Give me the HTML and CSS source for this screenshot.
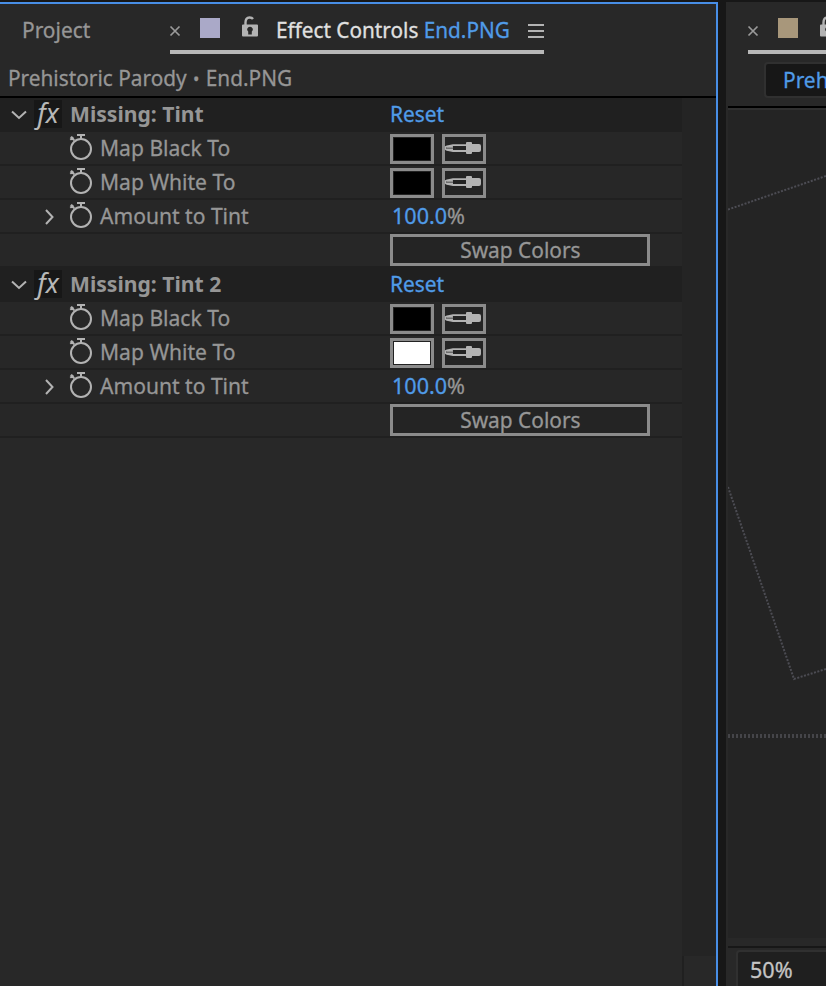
FILE: index.html
```html
<!DOCTYPE html>
<html lang="en">
<head>
<meta charset="utf-8">
<title>Effect Controls</title>
<link rel="stylesheet" href="styles.css">
</head>
<body>
<svg width="0" height="0" class="defs">
  <symbol id="watch" viewBox="0 0 24 28"><circle cx="12" cy="16" r="10" fill="none" stroke="#b3b3b3" stroke-width="2"/><path d="M8 2h8M12 2v4M1.800 3.800l3.400 3.400M1.300 6.800l3-2.500" fill="none" stroke="#b3b3b3" stroke-width="2"/></symbol>
  <symbol id="dropper" viewBox="0 0 38 24"><path d="M21 8.200H8L2 9.300Q.2 9.800.2 11T2 12.800l6 1.200H21M2 9.800h6M2 12.300h6" fill="none" stroke="#b3b3b3" stroke-width="1.800"/><path d="M22 5h4q1 0 1 1v1h7q2 0 2 2v4q0 2-2 2h-7v1q0 1-1 1h-4q-1 0-1-1V6q0-1 1-1z" fill="#b3b3b3"/></symbol>
  <symbol id="lock" viewBox="0 0 18 22"><path d="M3.500 9V6.500q0-5 4-5Q10 1.500 11 3" fill="none" stroke="#b3b3b3" stroke-width="2.400"/><path fill-rule="evenodd" d="M1 8.500h14q1 0 1 1v10q0 1-1 1H1q-1 0-1-1v-10q0-1 1-1zM8 10.700a2.700 2.700 0 0 0-1.800 4.800V18.500h3.600v-3A2.700 2.700 0 0 0 8 10.700z" fill="#b3b3b3"/></symbol>
  <symbol id="close" viewBox="0 0 12 12"><path d="M1.500 1.500l9 9M10.500 1.500l-9 9" stroke="#9a9a9a" stroke-width="1.700"/></symbol>
  <symbol id="down" viewBox="0 0 16 10"><path d="M1 1.500L8 8l7-6.500" fill="none" stroke="#b3b3b3" stroke-width="2"/></symbol>
  <symbol id="right" viewBox="0 0 10 16"><path d="M2 1L8.500 8 2 15" fill="none" stroke="#b3b3b3" stroke-width="2"/></symbol>
</svg>
<div class="app">
  <section class="controls">
    <header class="tabs">
      <div class="project"><span class="t">Project</span></div>
      <div class="tab">
        <svg class="x"><use href="#close"/></svg><i class="chip lilac"></i><svg class="lock"><use href="#lock"/></svg>
        <span class="t title">Effect Controls <b>End.PNG</b></span>
        <i class="burger"></i>
      </div>
    </header>
    <div class="crumb"><span class="t">Prehistoric Parody <span class="dot">•</span> End.PNG</span></div>
    <div class="body">
      <div class="effects">
        <div class="head"><svg class="down"><use href="#down"/></svg><span class="fx"><span>fx</span></span><span class="name"><span class="t">Missing: Tint</span></span><span class="t link reset">Reset</span></div>
        <div class="row"><span class="arrow"></span><svg class="watch"><use href="#watch"/></svg><span class="label"><span class="t">Map Black To</span></span><i class="swatch"></i><span class="pick"><svg><use href="#dropper"/></svg></span></div>
        <div class="row"><span class="arrow"></span><svg class="watch"><use href="#watch"/></svg><span class="label"><span class="t">Map White To</span></span><i class="swatch"></i><span class="pick"><svg><use href="#dropper"/></svg></span></div>
        <div class="row"><span class="arrow"><svg><use href="#right"/></svg></span><svg class="watch"><use href="#watch"/></svg><span class="label"><span class="t">Amount to Tint</span></span><span class="t value"><b>100.0</b>%</span></div>
        <div class="row last"><button><span class="t">Swap Colors</span></button></div>
        <div class="head second"><svg class="down"><use href="#down"/></svg><span class="fx"><span>fx</span></span><span class="name"><span class="t">Missing: Tint 2</span></span><span class="t link reset">Reset</span></div>
        <div class="row"><span class="arrow"></span><svg class="watch"><use href="#watch"/></svg><span class="label"><span class="t">Map Black To</span></span><i class="swatch"></i><span class="pick"><svg><use href="#dropper"/></svg></span></div>
        <div class="row"><span class="arrow"></span><svg class="watch"><use href="#watch"/></svg><span class="label"><span class="t">Map White To</span></span><i class="swatch white"></i><span class="pick"><svg><use href="#dropper"/></svg></span></div>
        <div class="row"><span class="arrow"><svg><use href="#right"/></svg></span><svg class="watch"><use href="#watch"/></svg><span class="label"><span class="t">Amount to Tint</span></span><span class="t value"><b>100.0</b>%</span></div>
        <div class="row"><button><span class="t">Swap Colors</span></button></div>
      </div>
      <div class="scroll"><i class="corner"></i></div>
    </div>
  </section>
  <section class="comp">
    <header class="comp-tab"><svg class="x"><use href="#close"/></svg><i class="chip tan"></i><svg class="lock"><use href="#lock"/></svg></header>
    <div class="comp-nav"><div class="comp-name"><span class="t">Preh</span></div></div>
    <div class="viewer"><svg viewBox="728 110 98 828"><g fill="none" stroke="#4c4c53" stroke-width="2" stroke-dasharray="2 1.500"><path d="M728 209.500L826 176M728 487l66 192 32-10"/><path d="M728 736h98" stroke="#454549" stroke-width="4" stroke-dasharray="2 2"/></g></svg></div>
    <footer><div class="zoom"><span class="t">50%</span></div></footer>
  </section>
</div>
</body>
</html>
```
FILE: styles.css
```css
* { box-sizing: border-box; }
body { margin: 0; background: #171717; color: #969696; font: 22px/30px "Noto Sans", sans-serif; overflow: hidden; }
svg { display: block; flex: none; }
i { flex: none; }
b { font-weight: inherit; color: #509be8; }
.defs { position: absolute; }
.app { display: flex; gap: 8px; height: 986px; padding-top: 2px; overflow: hidden; }
.t { display: inline-block; white-space: nowrap; transform: scaleX(.95); transform-origin: 0 50%; -webkit-text-stroke: .3px currentColor; }
.link { color: #509be8; }

.controls { width: 718px; flex: none; display: flex; flex-direction: column; background: #282828; border-top: 2px solid #488ee6; border-right: 2px solid #488ee6; }
.tabs { height: 50px; display: flex; }
.project { width: 170px; padding: 10px 0 0 22px; }
.tab { width: 374px; display: flex; border-bottom: 4px solid #b8b8b8; }
.x { width: 12px; height: 12px; margin: 21px 0 0 -1px; }
.chip { width: 20px; height: 20px; }
.lilac { background: #aaa9c8; margin: 14px 0 0 19px; }
.tan { background: #a8977b; }
.lock { width: 18px; height: 22px; }
.tab .lock { margin: 12px 0 0 22px; }
.title { width: 252px; margin: 10px 0 0 16px; color: #e0e0e0; transform: scaleX(.943); }
.burger { width: 16px; height: 14px; margin: 20px 0 0 auto; background: repeating-linear-gradient(#b3b3b3 0 2px, transparent 2px 6px); }
.crumb { height: 44px; padding: 8px 0 0 8px; border-bottom: 2px solid #000; }
.crumb .t { transform: scaleX(.946); }
.dot { font-size: 18px; vertical-align: 1px; margin: 0 1px; }
.body { flex: 1; display: flex; }
.effects { width: 682px; }
.head { height: 34px; display: flex; align-items: flex-start; background: #202020; }
.second { height: 36px; padding-top: 2px; }
.down { width: 16px; height: 10px; margin: 12px 0 0 11px; }
.fx { width: 28px; height: 28px; margin: 2px 0 0 7px; background: #171717; color: #b8b8b8; font: italic 27px/25px "Noto Sans", sans-serif; text-align: center; }
.name { width: 328px; padding-left: 8px; font-weight: 700; }
.name .t { transform: scaleX(.96); -webkit-text-stroke: 0; }
.row { height: 34px; display: flex; align-items: center; background: #272727; border-bottom: 2px solid #202020; }
.row.last { height: 32px; border-bottom: 0; }
.arrow { width: 69px; padding-left: 44px; }
.arrow svg { width: 10px; height: 16px; margin-top: 2px; }
.watch { width: 24px; height: 28px; margin-bottom: 2px; }
.label { width: 297px; padding-left: 7px; margin-bottom: 2px; }
.label .t { transform: scaleX(.958); }
.swatch { width: 44px; height: 30px; align-self: flex-end; border: 3px solid #8b8b8b; background: #000; box-shadow: inset 0 0 0 1px #222; }
.swatch.white { background: #fff; }
.pick { width: 44px; height: 30px; align-self: flex-end; margin-left: 8px; border: 3px solid #8b8b8b; background: #242424; }
.pick svg { width: 38px; height: 24px; overflow: visible; }
.value { margin: 0 0 2px 2px; transform: scaleX(.98); }
button { width: 260px; height: 32px; margin-left: 390px; padding: 0 0 2px; border: 3px solid #8b8b8b; background: #242424; color: #969696; font: inherit; line-height: 24px; flex: none; }
button .t { transform-origin: 50% 50%; }
.scroll { width: 34px; background: #242424; display: flex; flex-direction: column; justify-content: flex-end; }
.corner { height: 30px; border-left: 2px solid #202020; background: #282828; }

.comp { width: 100px; flex: none; background: #282828; padding-left: 2px; overflow: hidden; display: flex; flex-direction: column; }
.comp-tab { width: 200px; height: 52px; margin-left: 20px; display: flex; border-bottom: 4px solid #b8b8b8; }
.comp-tab .x { margin-top: 23px; }
.comp-tab .chip { margin: 16px 0 0 19px; }
.comp-tab .lock { margin: 14px 0 0 22px; }
.comp-nav { height: 54px; padding: 8px 0 0 36px; border-bottom: 2px solid #000; }
.comp-name { width: 220px; height: 36px; padding: 1px 0 0 17px; border: 2px solid #303030; border-radius: 4px; background: #171717; color: #509be8; line-height: 28px; }
.viewer { height: 830px; background: #242424; border-top: 2px solid #303030; }
.viewer svg { width: 98px; height: 828px; }
footer { height: 48px; padding-top: 8px; }
footer::before { content: ""; display: block; height: 2px; background: #171717; }
.zoom { width: 150px; height: 40px; margin: 2px 0 0 8px; padding: 2px 0 0 12px; border: 2px solid #303030; border-radius: 4px; background: #1f1f1f; color: #c5c5c5; }
.zoom .t { transform: scaleX(.98); }
```
